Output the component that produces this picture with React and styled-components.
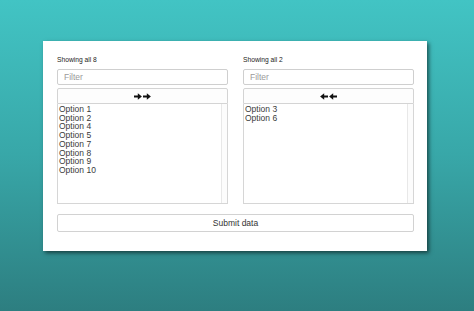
import React from "react";
import styled, { createGlobalStyle } from "styled-components";

const Global = createGlobalStyle`
  html, body { margin: 0; padding: 0; }
  body {
    width: 474px;
    height: 311px;
    overflow: hidden;
    font-family: "Liberation Sans", Arial, sans-serif;
  }
  #root { height: 311px; }
`;

const Page = styled.div`
  box-sizing: border-box;
  width: 474px;
  height: 311px;
  padding: 41px 0 0 43px;
  background: linear-gradient(to bottom, #42c4c4 0%, #38a7a8 50%, #2d7e80 100%);
`;

const Card = styled.div`
  box-sizing: border-box;
  width: 384px;
  height: 210px;
  background: #fff;
  padding: 15px 13px 0 14px;
  box-shadow: 2px 2px 4px rgba(0, 0, 0, 0.55);
  display: flex;
  flex-direction: column;
`;

const Columns = styled.div`
  display: grid;
  grid-template-columns: 171px 171px;
  column-gap: 15px;
`;

const Column = styled.div`
  display: flex;
  flex-direction: column;
`;

const Label = styled.div`
  font-size: 6.7px;
  line-height: 8px;
  height: 8px;
  color: #222;
  margin-bottom: 5px;
`;

const FilterInput = styled.div`
  box-sizing: border-box;
  height: 16px;
  border: 1px solid #cfcfcf;
  border-radius: 2px;
  padding-left: 6px;
  font-size: 8.5px;
  line-height: 14px;
  color: #9a9a9a;
  margin-bottom: 3px;
`;

const MoveButton = styled.div`
  box-sizing: border-box;
  height: 16px;
  border: 1px solid #d4d4d4;
  border-radius: 2px 2px 0 0;
  background: #fdfdfd;
  display: flex;
  align-items: center;
  justify-content: center;
  gap: 1px;
`;

const ListBox = styled.div`
  box-sizing: border-box;
  height: 100px;
  border: 1px solid #d6d6d6;
  border-top: none;
  display: flex;
`;

const Options = styled.div`
  flex: 1;
  padding: 1px 0 0 1px;
`;

const Option = styled.div`
  font-size: 8.5px;
  line-height: 8.7px;
  color: #3a3a3a;
`;

const Gutter = styled.div`
  width: 5px;
  border-left: 1px solid #e8e8e8;
  background: #fcfcfc;
`;

const Submit = styled.div`
  box-sizing: border-box;
  margin-top: 10px;
  height: 18px;
  border: 1px solid #d2d2d2;
  border-radius: 2px;
  display: flex;
  align-items: center;
  justify-content: center;
  font-size: 8.5px;
  color: #333;
`;

const Arrow = ({ dir }) => (
  <svg width="8" height="7" viewBox="0 0 8 7">
    <g transform={dir === "left" ? "translate(8,0) scale(-1,1)" : undefined}>
      <rect x="0" y="2.5" width="5" height="2" fill="#111" />
      <path d="M3.8 0.3 L7.9 3.5 L3.8 6.7 Z" fill="#111" />
    </g>
  </svg>
);

const Panel = ({ count, options, dir }) => (
  <Column>
    <Label>Showing all {count}</Label>
    <FilterInput>Filter</FilterInput>
    <MoveButton>
      <Arrow dir={dir} />
      <Arrow dir={dir} />
    </MoveButton>
    <ListBox>
      <Options>
        {options.map((o) => (
          <Option key={o}>{o}</Option>
        ))}
      </Options>
      <Gutter />
    </ListBox>
  </Column>
);

export default function App() {
  return (
    <>
      <Global />
      <Page>
        <Card>
          <Columns>
            <Panel
              count={8}
              dir="right"
              options={[
                "Option 1",
                "Option 2",
                "Option 4",
                "Option 5",
                "Option 7",
                "Option 8",
                "Option 9",
                "Option 10",
              ]}
            />
            <Panel count={2} dir="left" options={["Option 3", "Option 6"]} />
          </Columns>
          <Submit>Submit data</Submit>
        </Card>
      </Page>
    </>
  );
}
